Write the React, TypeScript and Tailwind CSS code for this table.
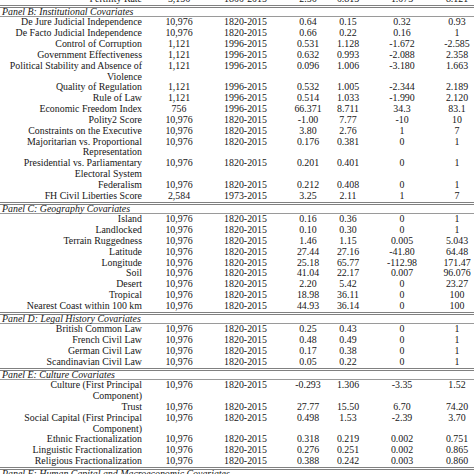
import React from "react"

type Row = { label: string[]; n: string; period: string; mean: string; sd: string; min: string; max: string }

const cols = "grid grid-cols-[147px_64px_69px_50px_46px_52px_58px]"

const r = (label: string | string[], n: string, period: string, mean: string, sd: string, min: string, max: string): Row => ({
  label: Array.isArray(label) ? label : [label],
  n,
  period,
  mean,
  sd,
  min,
  max,
})

const panels: { title: string; rows: Row[] }[] = [
  {
    title: "Panel B: Institutional Covariates",
    rows: [
      r("De Jure Judicial Independence", "10,976", "1820-2015", "0.64", "0.15", "0.32", "0.93"),
      r("De Facto Judicial Independence", "10,976", "1820-2015", "0.66", "0.22", "0.16", "1"),
      r("Control of Corruption", "1,121", "1996-2015", "0.531", "1.128", "-1.672", "-2.585"),
      r("Government Effectiveness", "1,121", "1996-2015", "0.632", "0.993", "-2.088", "2.358"),
      r(["Political Stability and Absence of", "Violence"], "1,121", "1996-2015", "0.096", "1.006", "-3.180", "1.663"),
      r("Quality of Regulation", "1,121", "1996-2015", "0.532", "1.005", "-2.344", "2.189"),
      r("Rule of Law", "1,121", "1996-2015", "0.514", "1.033", "-1.990", "2.120"),
      r("Economic Freedom Index", "756", "1996-2015", "66.371", "8.711", "34.3", "83.1"),
      r("Polity2 Score", "10,976", "1820-2015", "-1.00", "7.77", "-10", "10"),
      r("Constraints on the Executive", "10,976", "1820-2015", "3.80", "2.76", "1", "7"),
      r(["Majoritarian vs. Proportional", "Representation"], "10,976", "1820-2015", "0.176", "0.381", "0", "1"),
      r(["Presidential vs. Parliamentary", "Electoral System"], "10,976", "1820-2015", "0.201", "0.401", "0", "1"),
      r("Federalism", "10,976", "1820-2015", "0.212", "0.408", "0", "1"),
      r("FH Civil Liberties Score", "2,584", "1973-2015", "3.25", "2.11", "1", "7"),
    ],
  },
  {
    title: "Panel C: Geography Covariates",
    rows: [
      r("Island", "10,976", "1820-2015", "0.16", "0.36", "0", "1"),
      r("Landlocked", "10,976", "1820-2015", "0.10", "0.30", "0", "1"),
      r("Terrain Ruggedness", "10,976", "1820-2015", "1.46", "1.15", "0.005", "5.043"),
      r("Latitude", "10,976", "1820-2015", "27.44", "27.16", "-41.80", "64.48"),
      r("Longitude", "10,976", "1820-2015", "25.18", "65.77", "-112.98", "171.47"),
      r("Soil", "10,976", "1820-2015", "41.04", "22.17", "0.007", "96.076"),
      r("Desert", "10,976", "1820-2015", "2.20", "5.42", "0", "23.27"),
      r("Tropical", "10,976", "1820-2015", "18.98", "36.11", "0", "100"),
      r("Nearest Coast within 100 km", "10,976", "1820-2015", "44.93", "36.14", "0", "100"),
    ],
  },
  {
    title: "Panel D: Legal History Covariates",
    rows: [
      r("British Common Law", "10,976", "1820-2015", "0.25", "0.43", "0", "1"),
      r("French Civil Law", "10,976", "1820-2015", "0.48", "0.49", "0", "1"),
      r("German Civil Law", "10,976", "1820-2015", "0.17", "0.38", "0", "1"),
      r("Scandinavian Civil Law", "10,976", "1820-2015", "0.05", "0.22", "0", "1"),
    ],
  },
  {
    title: "Panel E: Culture Covariates",
    rows: [
      r(["Culture (First Principal", "Component)"], "10,976", "1820-2015", "-0.293", "1.306", "-3.35", "1.52"),
      r("Trust", "10,976", "1820-2015", "27.77", "15.50", "6.70", "74.20"),
      r(["Social Capital (First Principal", "Component)"], "10,976", "1820-2015", "0.498", "1.53", "-2.39", "3.70"),
      r("Ethnic Fractionalization", "10,976", "1820-2015", "0.318", "0.219", "0.002", "0.751"),
      r("Linguistic Fractionalization", "10,976", "1820-2015", "0.276", "0.251", "0.002", "0.865"),
      r("Religious Fractionalization", "10,976", "1820-2015", "0.388", "0.242", "0.003", "0.860"),
    ],
  },
]

function DataRow({ row }: { row: Row }) {
  return (
    <div className={`${cols} leading-[10.85px]`}>
      <div className="pr-[5px] text-right whitespace-nowrap">
        {row.label.map((l, i) => (
          <div key={i}>{l}</div>
        ))}
      </div>
      <div className="text-center">{row.n}</div>
      <div className="text-center">{row.period}</div>
      <div className="pl-[6px] text-center">{row.mean}</div>
      <div className="pr-[10px] text-center">{row.sd}</div>
      <div className="text-center">{row.min}</div>
      <div className="text-center whitespace-nowrap">{row.max}</div>
    </div>
  )
}

function PanelHeader({ title }: { title: string }) {
  return (
    <div className="h-[12.5px] border-t-[3px] border-double border-t-[#808080] border-b border-b-[#9a9a9a] pl-[2px] italic leading-[8.5px] whitespace-nowrap">
      {title}
    </div>
  )
}

export default function App() {
  return (
    <div className="h-[474px] w-[474px] overflow-hidden bg-white">
      <div
        className="-mt-[6px] w-[486px] text-[9.9px] text-[#161616]"
        style={{ fontFamily: '"Liberation Serif", "Times New Roman", serif' }}
      >
        <DataRow row={r("Fertility Rate", "3,156", "1800-2015", "2.56", "0.813", "1.073", "8.121")} />
        {panels.map((p) => (
          <div key={p.title}>
            <PanelHeader title={p.title} />
            {p.rows.map((row, i) => (
              <DataRow key={i} row={row} />
            ))}
          </div>
        ))}
        <PanelHeader title="Panel F: Human Capital and Macroeconomic Covariates" />
      </div>
    </div>
  )
}
